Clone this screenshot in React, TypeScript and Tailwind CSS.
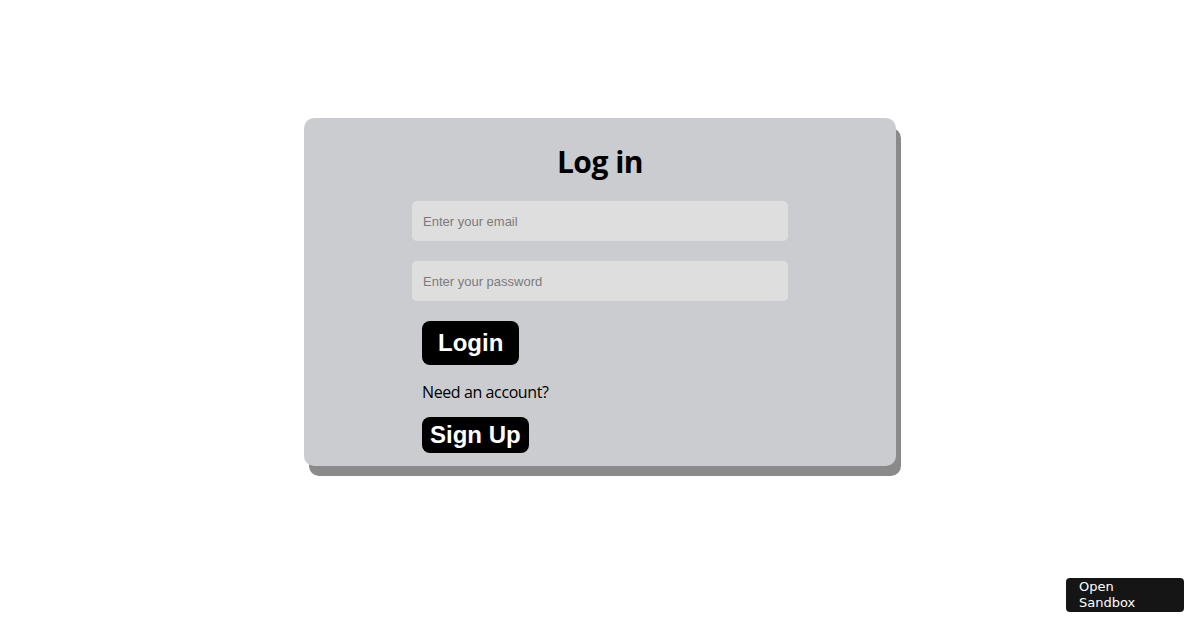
import React from "react";

export default function App() {
  return (
    <div className="relative w-full h-[630px] bg-white flex justify-center pt-[118px]">
      <div className="w-[592px] h-[348px] rounded-[10px] bg-[#cbcccf] shadow-[5px_10px_0_#8a8a8a] flex flex-col items-center">
        <h1 className="mt-[22px] h-[44px] text-[30px] leading-[44px] font-bold text-black tracking-[-0.5px] font-['Open_Sans',sans-serif]">
          Log in
        </h1>
        <div className="mt-[17px] w-[376px] flex flex-col">
          <input
            type="email"
            placeholder="Enter your email"
            className="h-[40px] w-full rounded-[5px] bg-[#dfdedf] px-[11px] text-[13px] text-black placeholder:text-[#7b7b7b] outline-none font-['Liberation_Sans',Arial,sans-serif]"
          />
          <input
            type="password"
            placeholder="Enter your password"
            className="mt-[20px] h-[40px] w-full rounded-[5px] bg-[#dfdedf] px-[11px] text-[13px] text-black placeholder:text-[#7b7b7b] outline-none font-['Liberation_Sans',Arial,sans-serif]"
          />
          <div className="ml-[10px] flex flex-col items-start">
            <button className="mt-[20px] h-[44px] px-[16px] rounded-[8px] bg-black text-white text-[24px] font-bold leading-[44px] font-['Liberation_Sans',Arial,sans-serif]">
              Login
            </button>
            <p className="mt-[16px] h-[22px] text-[16px] leading-[22px] text-black tracking-[-0.4px] font-['Open_Sans',sans-serif]">
              Need an account?
            </p>
            <button className="mt-[14px] h-[36px] px-[8px] rounded-[8px] bg-black text-white text-[24px] font-bold leading-[36px] font-['Liberation_Sans',Arial,sans-serif]">
              Sign Up
            </button>
          </div>
        </div>
      </div>
      <div className="absolute left-[1066px] top-[578px] w-[118px] h-[34px] rounded-[4px] bg-[#151515] text-white text-[13px] leading-[16px] pl-[13px] pt-[1px] font-['DejaVu_Sans',sans-serif]">
        Open
        <br />
        Sandbox
      </div>
    </div>
  );
}
